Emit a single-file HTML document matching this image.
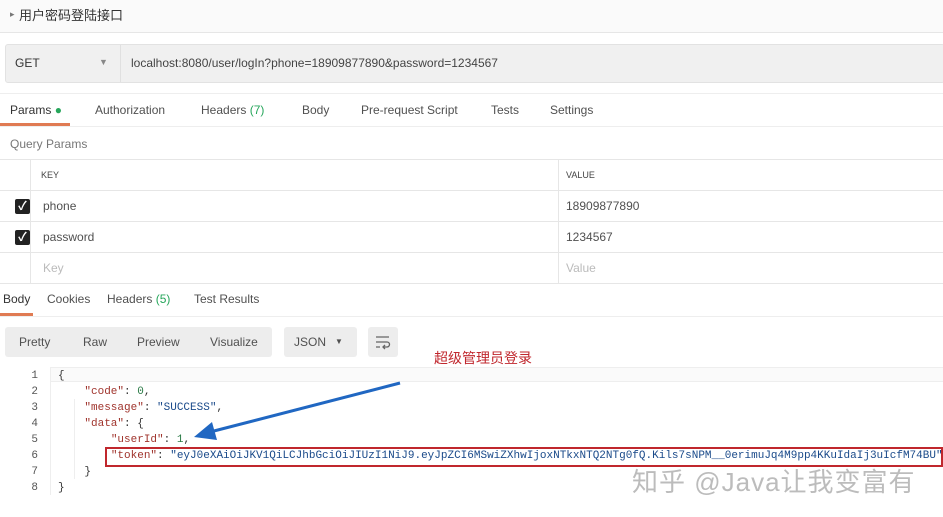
<!DOCTYPE html>
<html><head><meta charset="utf-8"><style>
*{margin:0;padding:0;box-sizing:border-box}
body{width:943px;height:517px;position:relative;background:#fff;font-family:"Liberation Sans","Noto Sans CJK SC",sans-serif;color:#505050;overflow:hidden;font-size:12px}
.a{position:absolute;white-space:nowrap}
.mono{font-family:"Liberation Mono","DejaVu Sans Mono",monospace;font-size:11px;color:#333}
.chk{position:absolute;width:15px;height:15px;background:#222;border-radius:2px;color:#fff;font-size:12px;line-height:15px;text-align:center;font-weight:bold}
</style></head><body>
<div class="a" style="left:0;top:0;width:943px;height:33px;background:#fafafa;border-bottom:1px solid #e6e6e6"></div>
<div class="a" style="left:10px;top:9px;font-size:9px;color:#777">▸</div>
<div class="a" style="left:19px;top:5px;font-size:13px;color:#333">用户密码登陆接口</div>
<div class="a" style="left:5px;top:44px;width:940px;height:39px;background:#f0f0f0;border:1px solid #e2e2e2;border-radius:3px"></div>
<div class="a" style="left:120px;top:45px;width:1px;height:37px;background:#e0e0e0"></div>
<div class="a" style="left:15px;top:56px;font-size:12px;color:#333">GET</div>
<div class="a" style="left:99px;top:57px;font-size:9px;color:#888">▼</div>
<div class="a" style="left:131px;top:56px;font-size:12px;color:#444">localhost:8080/user/logIn?phone=18909877890&amp;password=1234567</div>
<div class="a" style="left:0;top:93px;width:943px;height:1px;background:#eee"></div>
<div class="a" style="left:10px;top:103px;color:#333">Params <span style="color:#26a65b">●</span></div>
<div class="a" style="left:95px;top:103px">Authorization</div>
<div class="a" style="left:201px;top:103px">Headers <span style="color:#26a65b">(7)</span></div>
<div class="a" style="left:302px;top:103px">Body</div>
<div class="a" style="left:361px;top:103px">Pre-request Script</div>
<div class="a" style="left:491px;top:103px">Tests</div>
<div class="a" style="left:550px;top:103px">Settings</div>
<div class="a" style="left:0;top:123px;width:70px;height:3px;background:#e07b53"></div>
<div class="a" style="left:0;top:126px;width:943px;height:1px;background:#eee"></div>
<div class="a" style="left:10px;top:137px;color:#777">Query Params</div>
<div class="a" style="left:0;top:159px;width:943px;height:125px;border-top:1px solid #e6e6e6;border-bottom:1px solid #e6e6e6"></div>
<div class="a" style="left:0;top:190px;width:943px;height:1px;background:#e6e6e6"></div>
<div class="a" style="left:0;top:221px;width:943px;height:1px;background:#e6e6e6"></div>
<div class="a" style="left:0;top:252px;width:943px;height:1px;background:#e6e6e6"></div>
<div class="a" style="left:30px;top:160px;width:1px;height:124px;background:#e6e6e6"></div>
<div class="a" style="left:558px;top:160px;width:1px;height:124px;background:#e6e6e6"></div>
<div class="a" style="left:41px;top:170px;font-size:9px;color:#444">KEY</div>
<div class="a" style="left:566px;top:170px;font-size:9px;color:#444">VALUE</div>
<div class="chk" style="left:15px;top:199px">✓</div>
<div class="chk" style="left:15px;top:230px">✓</div>
<div class="a" style="left:43px;top:199px">phone</div>
<div class="a" style="left:566px;top:199px">18909877890</div>
<div class="a" style="left:43px;top:230px">password</div>
<div class="a" style="left:566px;top:230px">1234567</div>
<div class="a" style="left:43px;top:261px;color:#bbb">Key</div>
<div class="a" style="left:566px;top:261px;color:#bbb">Value</div>
<div class="a" style="left:0;top:285px;width:943px;height:232px;background:#fff"></div>
<div class="a" style="left:3px;top:292px;color:#333">Body</div>
<div class="a" style="left:47px;top:292px">Cookies</div>
<div class="a" style="left:107px;top:292px">Headers <span style="color:#26a65b">(5)</span></div>
<div class="a" style="left:194px;top:292px">Test Results</div>
<div class="a" style="left:0;top:313px;width:33px;height:3px;background:#e07b53"></div>
<div class="a" style="left:0;top:316px;width:943px;height:1px;background:#eee"></div>
<div class="a" style="left:5px;top:327px;width:267px;height:30px;background:#ededed;border-radius:3px"></div>
<div class="a" style="left:19px;top:335px">Pretty</div>
<div class="a" style="left:83px;top:335px">Raw</div>
<div class="a" style="left:137px;top:335px">Preview</div>
<div class="a" style="left:210px;top:335px">Visualize</div>
<div class="a" style="left:284px;top:327px;width:73px;height:30px;background:#ededed;border-radius:3px"></div>
<div class="a" style="left:294px;top:335px">JSON</div>
<div class="a" style="left:335px;top:337px;font-size:8px">▼</div>
<div class="a" style="left:368px;top:327px;width:30px;height:30px;background:#ededed;border-radius:3px"></div>
<svg class="a" style="left:374px;top:334px" width="18" height="16"><path d="M2 3h13M2 8h11a2.5 2.5 0 0 1 0 5h-4M2 13h4M11 11l-2 2 2 2" stroke="#666" stroke-width="1.3" fill="none"/></svg>
<div class="a" style="left:434px;top:348px;font-size:14px;color:#c0272d">超级管理员登录</div>
<div class="a" style="left:50px;top:367px;width:893px;height:15px;background:#fafafa;border-top:1px solid #eee;border-bottom:1px solid #eee"></div>
<div class="a" style="left:50px;top:367px;width:1px;height:128px;background:#eee"></div>
<div class="a" style="left:74px;top:399px;width:1px;height:80px;background:#eee"></div>
<div class="a mono" style="left:28px;top:368px;line-height:16px;color:#555;text-align:right;width:10px">1<br>2<br>3<br>4<br>5<br>6<br>7<br>8</div>
<div class="a mono" style="left:58px;top:368px;line-height:16px;white-space:pre"><span>{</span>
    <span style="color:#a0342d">"code"</span>: <span style="color:#2a7a45">0</span>,
    <span style="color:#a0342d">"message"</span>: <span style="color:#1a4a8a">"SUCCESS"</span>,
    <span style="color:#a0342d">"data"</span>: {
        <span style="color:#a0342d">"userId"</span>: <span style="color:#2a7a45">1</span>,
        <span style="color:#a0342d">"token"</span>: <span style="color:#1a4a8a">"eyJ0eXAiOiJKV1QiLCJhbGciOiJIUzI1NiJ9.eyJpZCI6MSwiZXhwIjoxNTkxNTQ2NTg0fQ.Kils7sNPM__0erimuJq4M9pp4KKuIdaIj3uIcfM74BU"</span>
    }
}</div>
<div class="a" style="left:105px;top:447px;width:838px;height:20px;border:2px solid #c0272d"></div>
<svg class="a" style="left:0;top:0" width="943" height="517"><line x1="400" y1="383" x2="210" y2="432" stroke="#2067c2" stroke-width="3"/><polygon points="194,437 212,422 217,440" fill="#2067c2"/></svg>
<div class="a" style="left:632px;top:462px;font-size:26px;color:rgba(160,160,160,.7);letter-spacing:1px">知乎 @Java让我变富有</div>
</body></html>
